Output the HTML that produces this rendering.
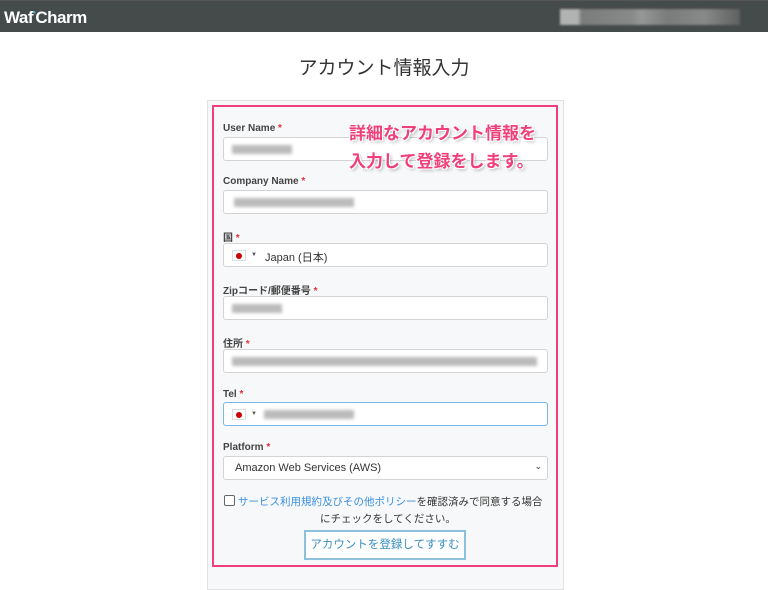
<!DOCTYPE html>
<html><head><meta charset="utf-8"><style>
*{box-sizing:border-box;margin:0;padding:0}
body{width:768px;height:575px;overflow:hidden;background:#fff;font-family:"Liberation Sans","Noto Sans CJK JP",sans-serif;position:relative}
.hdr{position:absolute;left:0;top:0;width:768px;height:32px;background:#454a4a;border-top:1px solid #555}
.logo{position:absolute;left:4px;top:7px;color:#fff;font-weight:bold;font-size:17px;letter-spacing:-0.5px}
.blur{position:absolute;left:560px;top:8px;width:180px;height:16px;background:linear-gradient(90deg,#ccc 0,#ccc 10%,#888 12%,#999 40%,#aaa 45%,#888 60%,#999 80%,#666 100%);opacity:.8;filter:blur(1px)}
h1{position:absolute;left:0;width:768px;top:53px;text-align:center;font-weight:normal;font-size:19px;color:#333}
.card{position:absolute;left:207px;top:100px;width:357px;height:490px;background:#f7f8f9;border:1px solid #e2e2e2}
.pink{position:absolute;left:212px;top:105px;width:346px;height:462px;border:2.5px solid #f03f7a}
.lbl{position:absolute;left:223px;font-size:10px;font-weight:bold;color:#444}
.lbl b{color:#e0303a}
.in{position:absolute;left:223px;width:325px;height:24px;background:#fff;border:1px solid #d4d4d4;border-radius:3px;font-size:11px;color:#333}
.bl{position:absolute;top:7px;height:9px;background:#bbb;filter:blur(1.5px)}
.flag{position:absolute;left:8px;top:6px;width:14px;height:11px;border:1px solid #ddd;background:#fff}
.flag:after{content:"";position:absolute;left:3px;top:2px;width:6px;height:6px;border-radius:50%;background:#c00}
.tri{position:absolute;left:27px;top:8px;font-size:6px;color:#555}
.call{position:absolute;left:349px;font-size:17px;font-weight:bold;color:#f0407a;text-shadow:1px 1px 0 #fff,-1px -1px 0 #fff,1px -1px 0 #fff,-1px 1px 0 #fff,2px 2px 3px rgba(0,0,0,.3)}
.chk{position:absolute;left:224px;top:495px;width:11px;height:11px;border:1px solid #666;border-radius:2px;background:#fff}
.t{position:absolute;font-size:10.5px;color:#333}
.btn{position:absolute;left:304px;top:530px;width:162px;height:30px;border:2px solid #8cc0db;background:#fff;color:#3a8fbf;font-size:11.5px;text-align:center;line-height:26px}
</style></head><body>
<div class="hdr"><div class="logo">Waf<span style="color:#3ab0d8;font-size:8px;vertical-align:top">•</span>Charm</div><div class="blur"></div></div>
<h1>アカウント情報入力</h1>
<div class="card"></div>
<div class="pink"></div>
<div class="lbl" style="top:123px">User Name <b>*</b></div>
<div class="in" style="top:137px"><div class="bl" style="left:8px;width:60px"></div></div>
<div class="lbl" style="top:176px">Company Name <b>*</b></div>
<div class="in" style="top:190px"><div class="bl" style="left:10px;width:120px"></div></div>
<div class="lbl" style="top:229px">国 <b>*</b></div>
<div class="in" style="top:243px"><div class="flag"></div><div class="tri">▼</div><span style="position:absolute;left:41px;top:5px">Japan (日本)</span></div>
<div class="lbl" style="top:282px">Zipコード/郵便番号 <b>*</b></div>
<div class="in" style="top:296px"><div class="bl" style="left:8px;width:50px"></div></div>
<div class="lbl" style="top:335px">住所 <b>*</b></div>
<div class="in" style="top:349px"><div class="bl" style="left:8px;width:305px"></div></div>
<div class="lbl" style="top:389px">Tel <b>*</b></div>
<div class="in" style="top:402px;border:1.5px solid #7ab8e8"><div class="flag"></div><div class="tri">▼</div><div class="bl" style="left:40px;width:90px"></div></div>
<div class="lbl" style="top:442px">Platform <b>*</b></div>
<div class="in" style="top:456px"><span style="position:absolute;left:11px;top:5px">Amazon Web Services (AWS)</span><span style="position:absolute;right:5px;top:4px;font-size:9px">⌄</span></div>
<div class="call" style="top:119px">詳細なアカウント情報を</div>
<div class="call" style="top:147px">入力して登録をします。</div>
<div class="chk"></div>
<div class="t" style="left:238px;top:494px"><span style="color:#3a8fe0">サービス利用規約及びその他ポリシー</span>を確認済みで同意する場合</div>
<div class="t" style="left:320px;top:511px">にチェックをしてください。</div>
<div class="btn">アカウントを登録してすすむ</div>
</body></html>
